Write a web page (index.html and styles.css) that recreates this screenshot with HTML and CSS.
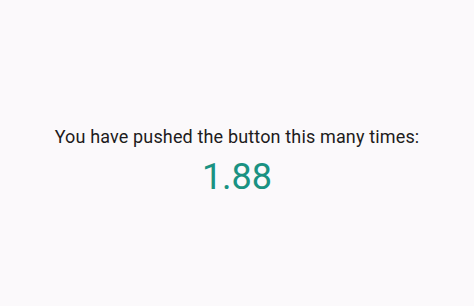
FILE: index.html
```html
<!DOCTYPE html>
<html>
<head>
<meta charset="utf-8">
<link rel="stylesheet" href="styles.css">
</head>
<body>
<main class="page">
  <div class="center">
    <p class="label">You have pushed the button this many times:</p>
    <p class="count">1.88</p>
  </div>
</main>
</body>
</html>
```
FILE: styles.css
```css
html, body {
  margin: 0;
  padding: 0;
  height: 100%;
}
body {
  background: #fbf9fb;
  font-family: Roboto, "Liberation Sans", sans-serif;
}
.page {
  box-sizing: border-box;
  height: 306px;
  padding-top: 18px;
  display: flex;
  align-items: center;
  justify-content: center;
}
.center {
  display: flex;
  flex-direction: column;
  align-items: center;
  gap: 6px;
}
.label {
  margin: 0;
  font-size: 18px;
  line-height: 24px;
  color: #1d1b20;
  letter-spacing: 0.15px;
}
.count {
  margin: 0;
  font-size: 36px;
  line-height: 44px;
  color: #1a9282;
}
```
